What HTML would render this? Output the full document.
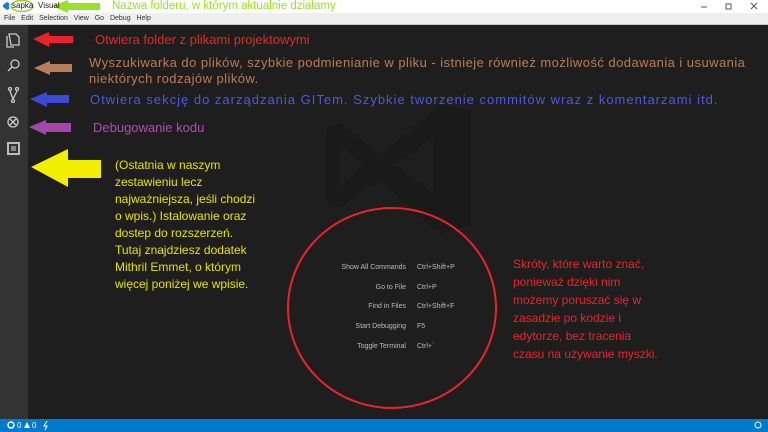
<!DOCTYPE html>
<html><head><meta charset="utf-8"><style>
*{margin:0;padding:0;box-sizing:border-box}
body{width:768px;height:432px;overflow:hidden;background:#1e1e1e;font-family:"Liberation Sans",sans-serif;position:relative}
.t{position:absolute;white-space:nowrap}
.k{position:absolute;font-size:7px;color:#bbb;white-space:nowrap}
</style></head><body>
<div style="position:absolute;left:0;top:0;width:768px;height:13px;background:#fff"></div>
<div style="position:absolute;left:0;top:13px;width:768px;height:12px;background:#efefef;border-bottom:1px solid #ccc"></div>
<div style="position:absolute;left:0;top:25px;width:28px;height:394px;background:#333"></div>
<div style="position:absolute;left:0;top:419px;width:768px;height:13px;background:#007acc"></div>
<svg style="position:absolute;left:0;top:0" width="768" height="432">
<path d="M3 5 L7 2 L9 3 L9 9 L7 10 L3 7 Z" fill="#1f7ad1"/>
<ellipse cx="22" cy="6" rx="11" ry="5.5" fill="none" stroke="#9acd32" stroke-width="1.5"/>
<polygon points="52,6 68,0 68,3 100,3 100,10 68,10 68,13" fill="#9be02a"/>
<line x1="701" y1="7" x2="707" y2="7" stroke="#555"/>
<rect x="726" y="4" width="5" height="5" fill="none" stroke="#555"/>
<path d="M751 3 L757 9 M757 3 L751 9" stroke="#555"/>
<g fill="none" stroke="#ccc" stroke-width="1.3">
<path d="M9 34 L16 34 L19 37 L19 45 L11 45 Z M7 36 L7 47 L14 47"/>
<circle cx="15" cy="64" r="4"/><path d="M12 67 L8 71"/>
<circle cx="10" cy="89" r="1.5"/><circle cx="17" cy="89" r="1.5"/><circle cx="13" cy="101" r="1.5"/><path d="M10 91 L13 99 M17 91 L13 99"/>
<circle cx="13" cy="122" r="5"/><path d="M10 119 L16 125 M16 119 L10 125"/>
</g>
<rect x="8" y="143" width="11" height="11" fill="none" stroke="#bbb" stroke-width="2"/>
<rect x="11" y="146" width="5" height="5" fill="#888"/>
<polygon points="33,39 49,32 49,36 73,36 73,43 49,43 49,47" fill="#e8242b"/>
<polygon points="34,68 50,61 50,64 72,64 72,72 50,72 50,75" fill="#b87c5a"/>
<polygon points="30,99 47,92 47,95 69,95 69,103 47,103 47,107" fill="#3b4bd1"/>
<polygon points="29,127 46,120 46,123 71,123 71,132 46,132 46,135" fill="#a347ad"/>
<polygon points="31,167 68,149 68,160 101,160 101,178 68,178 68,187" fill="#f2ee00"/>
<g fill="#1a1a1a">
<polygon points="326,129 340,123 380,155 440,105 470,110 470,225 440,235 380,180 340,208 326,200"/>
</g>
<polygon points="340,143 340,188 362,165" fill="#1e1e1e"/>
<polygon points="434,136 434,195 396,165" fill="#1e1e1e"/>
<ellipse cx="392" cy="308" rx="104" ry="100" fill="none" stroke="#e8242b" stroke-width="2"/>
<circle cx="11" cy="425" r="3" fill="none" stroke="#fff" stroke-width="1.5"/>
<polygon points="24,428 27,422 30,428" fill="#fff"/>
<path d="M47 421 L44 426 L47 426 L45 430" stroke="#fff" fill="none"/>
<circle cx="758" cy="425" r="3" fill="none" stroke="#fff"/>
</svg>
<div class="t" style="left:12px;top:1px;font-size:8px;color:#222">sapka</div>
<div class="t" style="left:38px;top:1px;font-size:8px;color:#222">Visual</div>
<div class="t" style="left:112px;top:0px;font-size:11.5px;color:#9be02a">Nazwa folderu, w którym aktualnie działamy</div>
<div class="t" style="left:4px;top:15px;font-size:7px;color:#333;word-spacing:1px">File &nbsp;Edit &nbsp;Selection &nbsp;View &nbsp;Go &nbsp;Debug &nbsp;Help</div>
<div class="t" style="left:95px;top:32px;font-size:13px;color:#e8242b">Otwiera folder z plikami projektowymi</div>
<div class="t" style="left:89px;top:55px;font-size:13px;letter-spacing:0.45px;line-height:16px;color:#c07a50">Wyszukiwarka do plików, szybkie podmienianie w pliku - istnieje również możliwość dodawania i usuwania<br>niektórych rodzajów plików.</div>
<div class="t" style="left:90px;top:92px;font-size:13px;letter-spacing:1px;color:#4a5ae0">Otwiera sekcję do zarządzania GITem. Szybkie tworzenie commitów wraz z komentarzami itd.</div>
<div class="t" style="left:93px;top:120px;font-size:13px;color:#b04cb8">Debugowanie kodu</div>
<div class="t" style="left:115px;top:157px;font-size:12px;line-height:17px;color:#e8e000">(Ostatnia w naszym<br>zestawieniu lecz<br>najważniejsza, jeśli chodzi<br>o wpis.) Istalowanie oraz<br>dostep do rozszerzeń.<br>Tutaj znajdziesz dodatek<br>Mithril Emmet, o którym<br>więcej poniżej we wpisie.</div>
<div class="t" style="left:513px;top:255px;font-size:12px;line-height:18px;color:#e8242b">Skróty, które warto znać,<br>ponieważ dzięki nim<br>możemy poruszać się w<br>zasadzie po kodzie i<br>edytorze, bez tracenia<br>czasu na używanie myszki.</div>
<div class="k" style="right:362px;top:264px">Show All Commands</div><div class="k" style="left:417px;top:264px">Ctrl+Shift+P</div>
<div class="k" style="right:362px;top:284px">Go to File</div><div class="k" style="left:417px;top:284px">Ctrl+P</div>
<div class="k" style="right:362px;top:303px">Find in Files</div><div class="k" style="left:417px;top:303px">Ctrl+Shift+F</div>
<div class="k" style="right:362px;top:323px">Start Debugging</div><div class="k" style="left:417px;top:323px">F5</div>
<div class="k" style="right:362px;top:343px">Toggle Terminal</div><div class="k" style="left:417px;top:343px">Ctrl+`</div>
<div class="t" style="left:17px;top:421px;font-size:8px;color:#fff">0</div>
<div class="t" style="left:32px;top:421px;font-size:8px;color:#fff">0</div>
</body></html>
